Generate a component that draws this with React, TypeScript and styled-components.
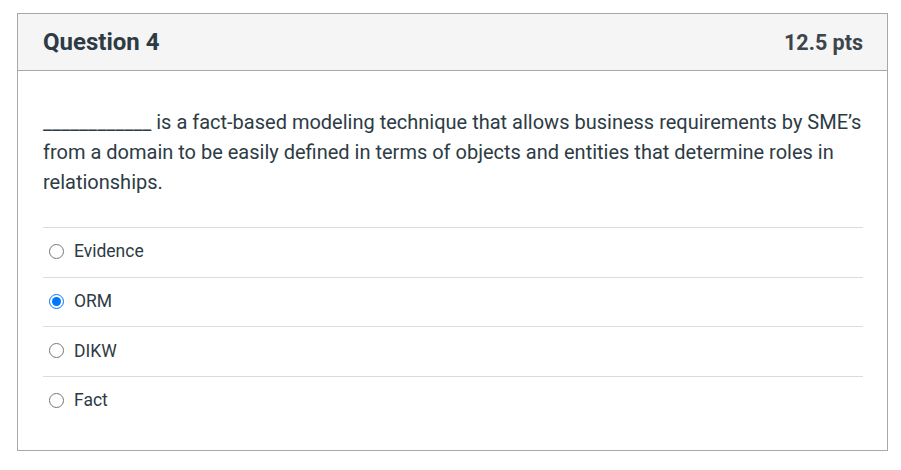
import styled, { createGlobalStyle } from "styled-components";

const GlobalStyle = createGlobalStyle`
  body {
    margin: 0;
    background: #fff;
    font-family: Roboto, "Liberation Sans", Arial, sans-serif;
    color: #2d3b45;
  }
`;

const options = ["Evidence", "ORM", "DIKW", "Fact"];

const App = () => {
  return (
    <>
      <GlobalStyle />
      <Page>
        <Card>
          <Header>
            <Title>Question 4</Title>
            <Points>12.5 pts</Points>
          </Header>
          <Body>
            <Prompt>
              ____________ is a fact-based modeling technique that allows
              business requirements by SME’s from a domain to be easily defined
              in terms of objects and entities that determine roles in
              relationships.
            </Prompt>
            <Answers>
              {options.map((o) => (
                <Answer key={o}>
                  <Radio
                    type="radio"
                    name="q4"
                    defaultChecked={o === "ORM"}
                  />
                  <AnswerText>{o}</AnswerText>
                </Answer>
              ))}
            </Answers>
          </Body>
        </Card>
      </Page>
    </>
  );
};

export default App;

const Page = styled.div`
  padding: 13px 13px 0 17px;
`;

const Card = styled.div`
  width: 871px;
  height: 438px;
  box-sizing: border-box;
  border: 1px solid #a8a8a8;
`;

const Header = styled.div`
  height: 57px;
  box-sizing: border-box;
  display: flex;
  align-items: center;
  justify-content: space-between;
  padding: 0 24px 0 25px;
  background: #f5f5f5;
  border-bottom: 1px solid #a8a8a8;
`;

const Title = styled.h2`
  margin: 0;
  font-size: 24px;
  font-weight: 700;
  color: #2d3b45;
`;

const Points = styled.div`
  font-size: 21.5px;
  font-weight: 700;
  color: #3d454c;
`;

const Body = styled.div`
  padding: 36px 24px 0 25px;
`;

const Prompt = styled.p`
  margin: 0 0 30px;
  font-size: 20px;
  line-height: 30px;
  color: #2d3b45;
`;

const Answers = styled.div`
  display: flex;
  flex-direction: column;
`;

const Answer = styled.label`
  display: flex;
  align-items: center;
  box-sizing: border-box;
  height: 49.7px;
  padding-bottom: 2px;
  border-top: 1px solid #dcdcdc;
`;

const Radio = styled.input`
  width: 15px;
  height: 15px;
  margin: 0 10px 0 6px;
`;

const AnswerText = styled.span`
  font-size: 17.5px;
  color: #2d3b45;
`;
